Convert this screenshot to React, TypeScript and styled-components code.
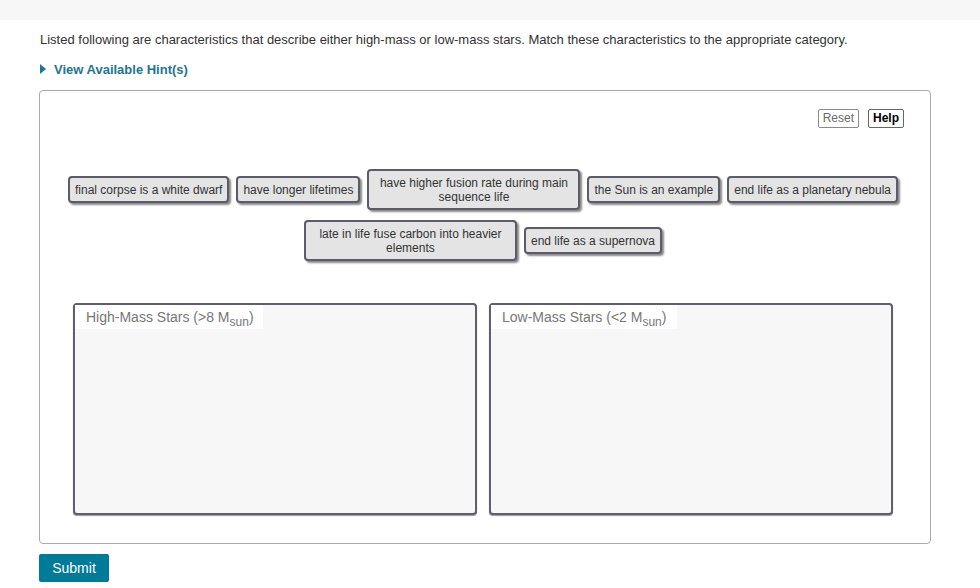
import React from "react";
import styled, { createGlobalStyle } from "styled-components";

const Global = createGlobalStyle`
  html, body { margin: 0; padding: 0; background: #fff; }
  body { font-family: "Liberation Sans", Arial, sans-serif; color: #333; }
  * { box-sizing: border-box; }
`;

const TopBar = styled.div`
  height: 20px;
  background: #f7f7f7;
`;

const Page = styled.div`
  padding: 11px 49px 0 39px;
`;

const Instructions = styled.p`
  margin: 0 0 0 1px;
  font-size: 13px;
  line-height: 18px;
  color: #333;
`;

const HintToggle = styled.div`
  margin-top: 11px;
  display: flex;
  align-items: center;
  gap: 8px;
  height: 18px;
  padding-left: 1px;
  font-size: 13px;
  font-weight: bold;
  color: #1d7591;
`;

const Panel = styled.div`
  margin-top: 12px;
  width: 892px;
  height: 454px;
  border: 1px solid #aaa;
  border-radius: 4px;
  padding: 18px 26px 0 33px;
  display: flex;
  flex-direction: column;
`;

const Toolbar = styled.div`
  display: flex;
  justify-content: flex-end;
  gap: 9px;
`;

const ToolButton = styled.button<{ $strong?: boolean }>`
  height: 19px;
  padding: 0 4px;
  font-family: "Liberation Sans", Arial, sans-serif;
  font-size: 12px;
  font-weight: ${(p) => (p.$strong ? "bold" : "normal")};
  color: ${(p) => (p.$strong ? "#000" : "#6a6a6a")};
  background: #fff;
  border: 1px solid ${(p) => (p.$strong ? "#666" : "#8a8a8a")};
  border-radius: 2px;
  line-height: 17px;
`;

const TileArea = styled.div`
  margin-top: 41px;
  width: 820px;
  display: flex;
  flex-direction: column;
  gap: 10px;
`;

const Row = styled.div`
  display: flex;
  justify-content: center;
  align-items: center;
  gap: 7px;
`;

const Tile = styled.div`
  flex-shrink: 0;
  max-width: 213px;
  padding: 5px 5px 4px;
  font-size: 12px;
  line-height: 14px;
  text-align: center;
  color: #333;
  background: #e4e4e4;
  border: 2px solid #5b5b69;
  border-radius: 4px;
  box-shadow: 2px 2px 2px #8a8a8a;
`;

const Zones = styled.div`
  margin-top: 42px;
  width: 820px;
  display: flex;
  gap: 12px;
`;

const Zone = styled.div`
  width: 404px;
  height: 212px;
  background: #f7f7f7;
  border: 2px solid #5f5f6d;
  border-radius: 4px;
  box-shadow: 0 1px 1px #999;
`;

const ZoneLabel = styled.div<{ $w: number }>`
  width: ${(p) => p.$w}px;
  height: 24px;
  background: #fff;
  padding-left: 11px;
  font-size: 14px;
  line-height: 24px;
  color: #777;
  sub {
    font-size: 12px;
    vertical-align: -4px;
    line-height: 0;
  }
`;

const Submit = styled.button`
  margin-top: 10px;
  width: 70px;
  height: 28px;
  border: none;
  border-radius: 2px;
  background: #007a99;
  color: #fff;
  font-family: "Liberation Sans", Arial, sans-serif;
  font-size: 14px;
  padding: 0;
`;

export default function App() {
  return (
    <>
      <Global />
      <TopBar />
      <Page>
        <Instructions>
          Listed following are characteristics that describe either high-mass or low-mass stars. Match these characteristics to the appropriate category.
        </Instructions>
        <HintToggle>
          <svg width="6" height="10" viewBox="0 0 6 10">
            <path d="M0 0 L6 5 L0 10 Z" fill="#1d7591" />
          </svg>
          View Available Hint(s)
        </HintToggle>
        <Panel>
          <Toolbar>
            <ToolButton>Reset</ToolButton>
            <ToolButton $strong>Help</ToolButton>
          </Toolbar>
          <TileArea>
            <Row>
              <Tile>final corpse is a white dwarf</Tile>
              <Tile>have longer lifetimes</Tile>
              <Tile>have higher fusion rate during main sequence life</Tile>
              <Tile>the Sun is an example</Tile>
              <Tile>end life as a planetary nebula</Tile>
            </Row>
            <Row>
              <Tile>late in life fuse carbon into heavier elements</Tile>
              <Tile>end life as a supernova</Tile>
            </Row>
          </TileArea>
          <Zones>
            <Zone>
              <ZoneLabel $w={188}>
                High-Mass Stars (&gt;8 M<sub>sun</sub>)
              </ZoneLabel>
            </Zone>
            <Zone>
              <ZoneLabel $w={186}>
                Low-Mass Stars (&lt;2 M<sub>sun</sub>)
              </ZoneLabel>
            </Zone>
          </Zones>
        </Panel>
        <Submit>Submit</Submit>
      </Page>
    </>
  );
}
